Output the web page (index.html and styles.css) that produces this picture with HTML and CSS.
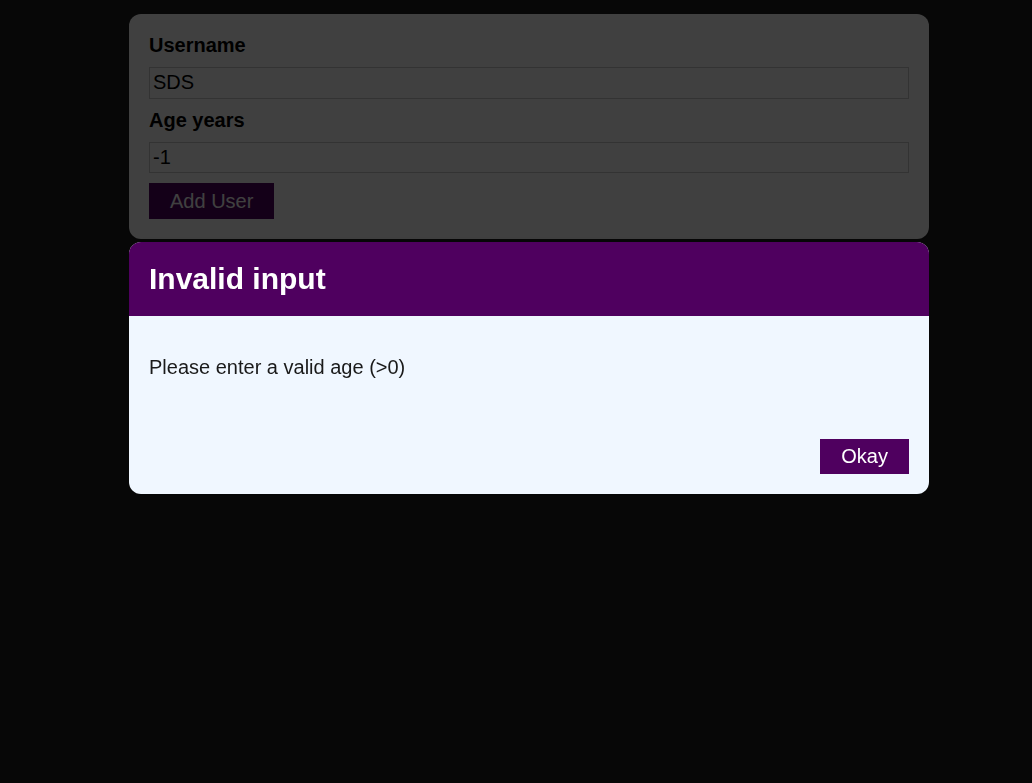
FILE: index.html
```html
<!DOCTYPE html>
<html lang="en">
<head>
<meta charset="utf-8">
<title>Add User</title>
<link rel="stylesheet" href="styles.css">
</head>
<body>
<div class="app">
  <form class="card input-card">
    <label class="field-label" for="username">Username</label>
    <input class="field" id="username" type="text" value="SDS">
    <label class="field-label" for="age">Age years</label>
    <input class="field" id="age" type="number" value="-1">
    <button class="button" type="button">Add User</button>
  </form>
</div>
<div class="backdrop"></div>
<div class="card modal">
  <header class="modal-header">
    <h2 class="modal-title">Invalid input</h2>
  </header>
  <div class="modal-content">
    <p class="modal-text">Please enter a valid age (&gt;0)</p>
  </div>
  <footer class="modal-actions">
    <button class="button button-small" type="button">Okay</button>
  </footer>
</div>
</body>
</html>
```

FILE: styles.css
```css
* {
  box-sizing: border-box;
}

html {
  font-family: "Liberation Sans", Arial, sans-serif;
  font-size: 20px;
}

body {
  margin: 0;
  background: #1f1f1f;
  min-height: 100vh;
}

.app {
  padding-top: 14px;
  padding-left: 129px;
}

.card {
  background: #ffffff;
  box-shadow: 0 2px 8px rgba(0, 0, 0, 0.26);
  border-radius: 12px;
}

.input-card {
  width: 800px;
  padding: 20px;
}

.field-label {
  display: block;
  font-weight: bold;
  font-size: 20px;
  line-height: 23px;
  margin-bottom: 10px;
  color: #000;
}

.field {
  display: block;
  width: 100%;
  font: inherit;
  font-size: 20px;
  line-height: 23.5px;
  border: 1px solid #cccccc;
  padding: 3px;
  margin: 0 0 10px 0;
  color: #000;
  background: #fff;
  -moz-appearance: textfield;
}

.field::-webkit-outer-spin-button,
.field::-webkit-inner-spin-button {
  -webkit-appearance: none;
  margin: 0;
}

.button {
  font: inherit;
  font-size: 20px;
  line-height: 24px;
  border: 1px solid #4f005f;
  background: #4f005f;
  color: #ffffff;
  padding: 5px 20px;
  cursor: pointer;
  display: block;
}

.button-small {
  line-height: 23px;
}

.backdrop {
  position: fixed;
  top: 0;
  left: 0;
  width: 100%;
  height: 100vh;
  z-index: 10;
  background: rgba(0, 0, 0, 0.75);
}

.modal {
  position: fixed;
  top: 242px;
  left: 129px;
  width: 800px;
  z-index: 100;
  overflow: hidden;
  background: #f0f7ff;
}

.modal-header {
  background: #4f005f;
  padding: 20px;
}

.modal-title {
  margin: 0;
  color: #ffffff;
  font-size: 30px;
  line-height: 34px;
  font-weight: bold;
}

.modal-content {
  padding: 20px;
}

.modal-text {
  margin: 20px 0;
  font-size: 20px;
  line-height: 23px;
  color: #1a1a1a;
}

.modal-actions {
  padding: 20px;
  display: flex;
  justify-content: flex-end;
}
```
